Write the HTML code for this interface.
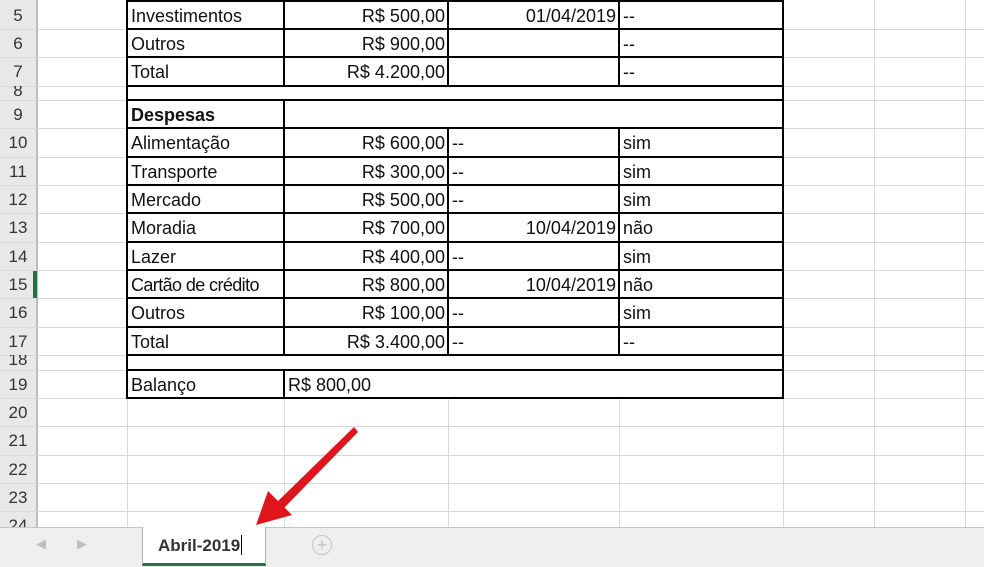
<!DOCTYPE html>
<html><head><meta charset="utf-8"><style>
body{margin:0;width:984px;height:566px;overflow:hidden;background:#fff;font-family:"Liberation Sans",sans-serif;position:relative}
.a{position:absolute}
.h{position:absolute;left:0;width:984px;height:1px;background:#d9d9d9}
.v{position:absolute;top:0;width:1px;height:527px;background:#d9d9d9}
.bh{position:absolute;height:2px;background:#000}
.bv{position:absolute;width:2px;background:#000}
.t{position:absolute;font-size:18px;color:#111;line-height:28px;white-space:nowrap}
.r{text-align:right}
.n{position:absolute;left:0;width:36px;text-align:center;font-size:17px;color:#333;line-height:28px}
</style></head><body>
<div class="a" style="left:0;top:0;width:36px;height:527px;background:#e8e8e8;border-right:1px solid #bcbcbc"></div>
<div class="h" style="top:29px"></div><div class="h" style="top:57px"></div><div class="h" style="top:86px"></div><div class="h" style="top:100px"></div><div class="h" style="top:128px"></div><div class="h" style="top:157px"></div><div class="h" style="top:185px"></div><div class="h" style="top:213px"></div><div class="h" style="top:242px"></div><div class="h" style="top:270px"></div><div class="h" style="top:298px"></div><div class="h" style="top:327px"></div><div class="h" style="top:355px"></div><div class="h" style="top:370px"></div><div class="h" style="top:398px"></div><div class="h" style="top:426px"></div><div class="h" style="top:455px"></div><div class="h" style="top:483px"></div><div class="h" style="top:511px"></div>
<div class="v" style="left:127px"></div><div class="v" style="left:284px"></div><div class="v" style="left:448px"></div><div class="v" style="left:619px"></div><div class="v" style="left:783px"></div><div class="v" style="left:874px"></div><div class="v" style="left:965px"></div>
<div class="a" style="left:0;top:0;width:37px;height:527px;border-right:1px solid #bcbcbc"></div>
<div class="a" style="left:33px;top:271px;width:4px;height:27px;background:#217346"></div>
<div class="a" style="left:127px;top:0;width:656px;height:398px;background:#fff"></div>
<div class="bv" style="left:126px;top:0;height:399px"></div>
<div class="bv" style="left:782px;top:0;height:399px"></div>
<div class="bv" style="left:283px;top:0;height:86px"></div>
<div class="bv" style="left:447px;top:0;height:86px"></div>
<div class="bv" style="left:618px;top:0;height:86px"></div>
<div class="bv" style="left:283px;top:100px;height:255px"></div>
<div class="bv" style="left:447px;top:128px;height:227px"></div>
<div class="bv" style="left:618px;top:128px;height:227px"></div>
<div class="bv" style="left:283px;top:370px;height:28px"></div>
<div class="bh" style="left:126px;width:658px;top:0"></div>
<div class="bh" style="left:126px;width:658px;top:28px"></div><div class="bh" style="left:126px;width:658px;top:56px"></div><div class="bh" style="left:126px;width:658px;top:85px"></div><div class="bh" style="left:126px;width:658px;top:99px"></div><div class="bh" style="left:126px;width:658px;top:127px"></div><div class="bh" style="left:126px;width:658px;top:156px"></div><div class="bh" style="left:126px;width:658px;top:184px"></div><div class="bh" style="left:126px;width:658px;top:212px"></div><div class="bh" style="left:126px;width:658px;top:241px"></div><div class="bh" style="left:126px;width:658px;top:269px"></div><div class="bh" style="left:126px;width:658px;top:297px"></div><div class="bh" style="left:126px;width:658px;top:326px"></div><div class="bh" style="left:126px;width:658px;top:354px"></div><div class="bh" style="left:126px;width:658px;top:369px"></div><div class="bh" style="left:126px;width:658px;top:397px"></div>
<div class="n" style="top:2px">5</div><div class="n" style="top:30px">6</div><div class="n" style="top:58px">7</div><div class="n" style="top:86px;height:14px;overflow:hidden;line-height:10px">8</div><div class="n" style="top:101px">9</div><div class="n" style="top:129px">10</div><div class="n" style="top:158px">11</div><div class="n" style="top:186px">12</div><div class="n" style="top:214px">13</div><div class="n" style="top:243px">14</div><div class="n" style="top:271px">15</div><div class="n" style="top:299px">16</div><div class="n" style="top:328px">17</div><div class="n" style="top:355px;height:15px;overflow:hidden;line-height:10px">18</div><div class="n" style="top:371px">19</div><div class="n" style="top:399px">20</div><div class="n" style="top:427px">21</div><div class="n" style="top:456px">22</div><div class="n" style="top:484px">23</div><div class="n" style="top:512px;height:15px;overflow:hidden">24</div>
<div class="t" style="left:131px;top:2px">Investimentos</div><div class="t r" style="left:288px;width:157px;top:2px">R$ 500,00</div><div class="t r" style="left:452px;width:164px;top:2px">01/04/2019</div><div class="t" style="left:623px;top:2px">--</div>
<div class="t" style="left:131px;top:30px">Outros</div><div class="t r" style="left:288px;width:157px;top:30px">R$ 900,00</div><div class="t" style="left:623px;top:30px">--</div>
<div class="t" style="left:131px;top:58px">Total</div><div class="t r" style="left:288px;width:157px;top:58px">R$ 4.200,00</div><div class="t" style="left:623px;top:58px">--</div>
<div class="t" style="left:131px;top:101px;font-weight:bold">Despesas</div>
<div class="t" style="left:131px;top:129px">Alimentação</div><div class="t r" style="left:288px;width:157px;top:129px">R$ 600,00</div><div class="t" style="left:452px;top:129px">--</div><div class="t" style="left:623px;top:129px">sim</div>
<div class="t" style="left:131px;top:158px">Transporte</div><div class="t r" style="left:288px;width:157px;top:158px">R$ 300,00</div><div class="t" style="left:452px;top:158px">--</div><div class="t" style="left:623px;top:158px">sim</div>
<div class="t" style="left:131px;top:186px">Mercado</div><div class="t r" style="left:288px;width:157px;top:186px">R$ 500,00</div><div class="t" style="left:452px;top:186px">--</div><div class="t" style="left:623px;top:186px">sim</div>
<div class="t" style="left:131px;top:214px">Moradia</div><div class="t r" style="left:288px;width:157px;top:214px">R$ 700,00</div><div class="t r" style="left:452px;width:164px;top:214px">10/04/2019</div><div class="t" style="left:623px;top:214px">não</div>
<div class="t" style="left:131px;top:243px">Lazer</div><div class="t r" style="left:288px;width:157px;top:243px">R$ 400,00</div><div class="t" style="left:452px;top:243px">--</div><div class="t" style="left:623px;top:243px">sim</div>
<div class="t" style="left:131px;top:271px;letter-spacing:-0.6px">Cartão de crédito</div><div class="t r" style="left:288px;width:157px;top:271px">R$ 800,00</div><div class="t r" style="left:452px;width:164px;top:271px">10/04/2019</div><div class="t" style="left:623px;top:271px">não</div>
<div class="t" style="left:131px;top:299px">Outros</div><div class="t r" style="left:288px;width:157px;top:299px">R$ 100,00</div><div class="t" style="left:452px;top:299px">--</div><div class="t" style="left:623px;top:299px">sim</div>
<div class="t" style="left:131px;top:328px">Total</div><div class="t r" style="left:288px;width:157px;top:328px">R$ 3.400,00</div><div class="t" style="left:452px;top:328px">--</div><div class="t" style="left:623px;top:328px">--</div>
<div class="t" style="left:131px;top:371px">Balanço</div><div class="t" style="left:288px;top:371px">R$ 800,00</div>
<div class="a" style="left:0;top:527px;width:984px;height:39px;background:#efefef;border-top:1px solid #c6c6c6"></div>
<div class="a" style="left:36px;top:536px;color:#c0c0c0;font-size:13px">&#9664;</div>
<div class="a" style="left:77px;top:536px;color:#c0c0c0;font-size:13px">&#9654;</div>
<div class="a" style="left:142px;top:527px;width:122px;height:36px;background:#fff;border-left:1px solid #b0b0b0;border-right:1px solid #b0b0b0;border-bottom:3px solid #217346"></div>
<div class="a" style="left:158px;top:535px;font-size:17px;font-weight:bold;color:#333">Abril-2019<span style="display:inline-block;width:1px;height:20px;background:#000;vertical-align:-4px;margin-left:1px"></span></div>
<div class="a" style="left:312px;top:535px;width:18px;height:18px;border:1.5px solid #c4c4c4;border-radius:50%;color:#c4c4c4;text-align:center;line-height:18px;font-size:18px">+</div>
<svg class="a" style="left:0;top:0" width="984" height="566"><path d="M354 427 L276 503 L283 509 L358 432 Z" fill="#e0141b"/><path d="M256 525 L268 491 L292 515 Z" fill="#e0141b"/></svg>
</body></html>
